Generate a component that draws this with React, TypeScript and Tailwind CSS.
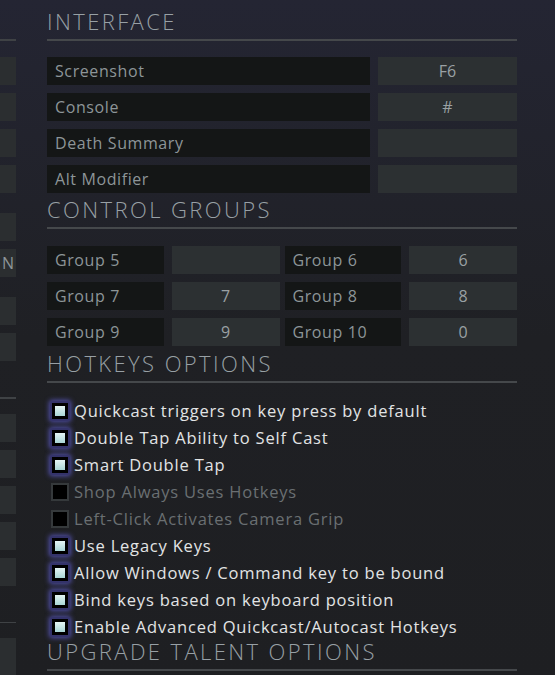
import React from "react";

const font = { fontFamily: '"Open Sans", "Noto Sans", sans-serif' };

const interfaceRows = [
  { label: "Screenshot", key: "F6" },
  { label: "Console", key: "#" },
  { label: "Death Summary", key: "" },
  { label: "Alt Modifier", key: "" },
];

const groups = [
  ["Group 5", "", "Group 6", "6"],
  ["Group 7", "7", "Group 8", "8"],
  ["Group 9", "9", "Group 10", "0"],
];

const options = [
  { text: "Quickcast triggers on key press by default", on: true },
  { text: "Double Tap Ability to Self Cast", on: true },
  { text: "Smart Double Tap", on: true },
  { text: "Shop Always Uses Hotkeys", on: false },
  { text: "Left-Click Activates Camera Grip", on: false },
  { text: "Use Legacy Keys", on: true },
  { text: "Allow Windows / Command key to be bound", on: true },
  { text: "Bind keys based on keyboard position", on: true },
  { text: "Enable Advanced Quickcast/Autocast Hotkeys", on: true },
];

function Heading({ title, h }: { title: string; h: string }) {
  return (
    <div className={`${h} flex items-end border-b-2 border-[#45484b]`}>
      <span className="text-[22px] leading-[22px] font-light tracking-[2.4px] text-[#98a0a5] pb-[7px]">
        {title}
      </span>
    </div>
  );
}

function Checkbox({ on }: { on: boolean }) {
  if (!on) {
    return (
      <div className="w-[20px] h-[20px] flex items-center justify-center">
        <div className="w-[18px] h-[18px] bg-black border-2 border-[#35393b]" />
      </div>
    );
  }
  return (
    <div className="w-[20px] h-[20px] flex items-center justify-center rounded-[2px] bg-[#34336a] shadow-[0_0_5px_1px_#5150a8]">
      <div className="w-[16px] h-[16px] bg-black p-[3px]">
        <div className="w-full h-full bg-gradient-to-b from-[#e4f4f4] to-[#a9d6d6]" />
      </div>
    </div>
  );
}

export default function App() {
  return (
    <div
      style={font}
      className="w-[555px] h-[675px] overflow-hidden flex bg-gradient-to-b from-[#242533] via-[#1f2024] to-[#1e1f22]"
    >
      {/* left column, cut off */}
      <div className="w-[16px] flex flex-col">
        <div className="mt-[39px] h-[2px] bg-[#3f4245]" />
        <div className="mt-[16px] flex flex-col gap-[8px]">
          {[0, 1, 2, 3].map((i) => (
            <div key={i} className="h-[28px] bg-[#2b2e30]" />
          ))}
        </div>
        <div className="mt-[20px] flex flex-col gap-[8px]">
          <div className="h-[28px] bg-[#2b2e30]" />
          <div className="h-[28px] bg-[#2b2e30] overflow-hidden flex items-center justify-end text-[16px] text-[#8d9598]">
            <span className="mr-[2px]">N</span>
          </div>
        </div>
        <div className="mt-[20px] flex flex-col gap-[8px]">
          <div className="h-[28px] bg-[#2b2e30]" />
          <div className="h-[28px] bg-[#2b2e30]" />
        </div>
        <div className="mt-[36px] h-[2px] bg-[#3f4245]" />
        <div className="mt-[15px] flex flex-col gap-[8px]">
          {[0, 1, 2, 3, 4].map((i) => (
            <div key={i} className="h-[28px] bg-[#2b2e30]" />
          ))}
        </div>
        <div className="mt-[36px] h-[2px] bg-[#3f4245]" />
        <div className="mt-[15px] h-[40px] bg-[#2b2e30]" />
      </div>

      {/* main column */}
      <div className="ml-[31px] w-[470px] flex flex-col">
        <Heading title="INTERFACE" h="h-[41px]" />
        <div className="mt-[16px] flex flex-col gap-[8px]">
          {interfaceRows.map((r) => (
            <div key={r.label} className="flex h-[28px] gap-[8px]">
              <div className="flex-1 bg-[#141616] flex items-center pl-[8px] text-[16px] tracking-[0.6px] text-[#8d9598]">
                {r.label}
              </div>
              <div className="w-[139px] bg-[#2c3032] flex items-center justify-center text-[16px] text-[#9aa1a4]">
                {r.key}
              </div>
            </div>
          ))}
        </div>

        <Heading title="CONTROL GROUPS" h="h-[36px]" />
        <div className="mt-[17px] flex flex-col gap-[8px]">
          {groups.map((g) => (
            <div key={g[0]} className="flex h-[28px]">
              <div className="w-[117px] bg-[#141616] flex items-center pl-[8px] text-[16px] tracking-[0.6px] text-[#8d9598]">
                {g[0]}
              </div>
              <div className="ml-[8px] w-[108px] bg-[#2c3032] flex items-center justify-center text-[16px] text-[#9aa1a4]">
                {g[1]}
              </div>
              <div className="ml-[5px] w-[117px] bg-[#141616] flex items-center pl-[8px] text-[16px] tracking-[0.6px] text-[#8d9598]">
                {g[2]}
              </div>
              <div className="ml-[8px] w-[108px] bg-[#2c3032] flex items-center justify-center text-[16px] text-[#9aa1a4]">
                {g[3]}
              </div>
            </div>
          ))}
        </div>

        <Heading title="HOTKEYS OPTIONS" h="h-[37px]" />
        <div className="mt-[14px] flex flex-col">
          {options.map((o) => (
            <div key={o.text} className="h-[27px] flex items-center">
              <div className="ml-[3px]">
                <Checkbox on={o.on} />
              </div>
              <span
                className={`ml-[4px] text-[16.5px] leading-[22px] tracking-[0.8px] ${
                  o.on ? "text-[#e2e4e5]" : "text-[#6a6f72]"
                }`}
              >
                {o.text}
              </span>
            </div>
          ))}
        </div>

        <Heading title="UPGRADE TALENT OPTIONS" h="h-[31px]" />
      </div>
    </div>
  );
}
